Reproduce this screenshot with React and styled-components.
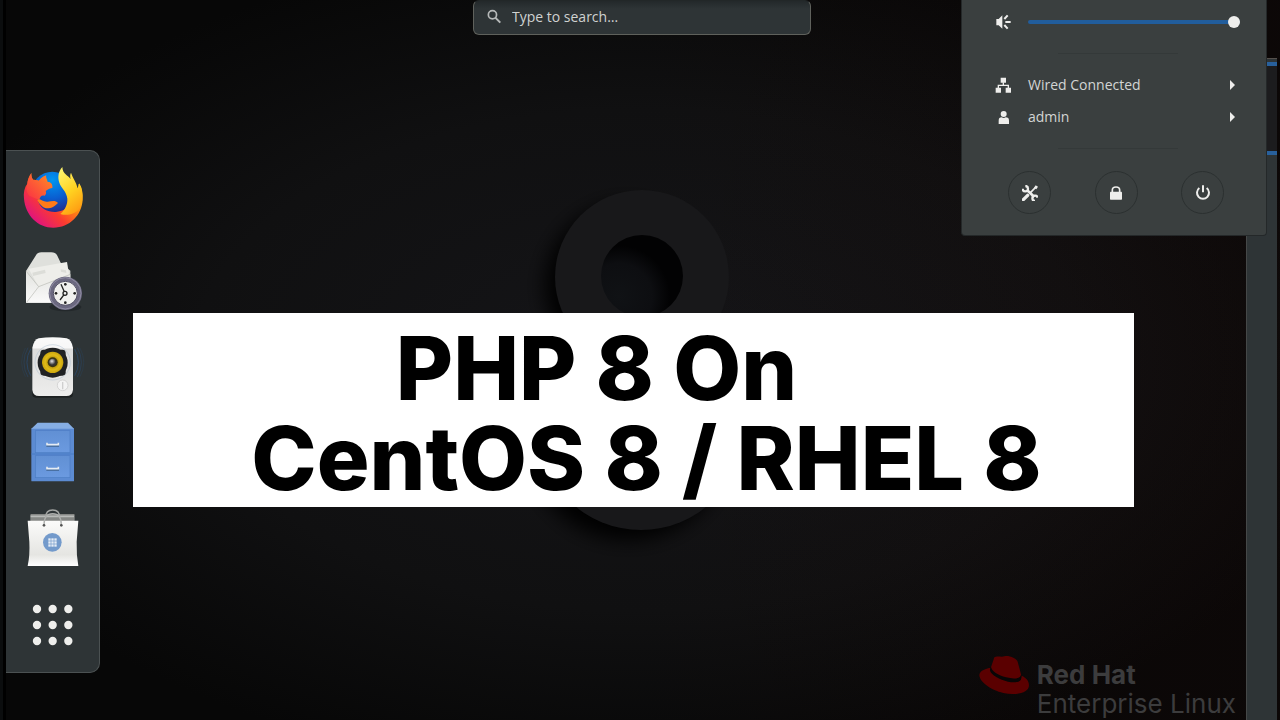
import { useState } from 'react';
import styled, { createGlobalStyle } from 'styled-components';

const GlobalStyle = createGlobalStyle`
	*, *::before, *::after {
		box-sizing: border-box;
	}
	body {
		margin: 0;
		background: #000;
		font-family: 'Open Sans', 'Noto Sans', sans-serif;
	}
	button {
		padding: 0;
		border: 0;
		background: none;
		color: inherit;
		font: inherit;
		cursor: pointer;
	}
`;

const Desktop = styled.div`
	position: relative;
	display: grid;
	grid-template-columns: 100px 1fr 34px;
	min-height: 100vh;
	overflow: hidden;
	background: #0a0a0b;
`;

const Wallpaper = styled.svg`
	position: absolute;
	inset: 0;
	width: 100%;
	height: 100%;
`;

const Side = styled.div`
	position: relative;
	padding-left: 6px;
	background: linear-gradient(to right, #0b0d0e 3px, #000 3px, #000 6px, transparent 6px);
`;

const Dock = styled.nav`
	display: flex;
	flex-direction: column;
	gap: 25px;
	margin-top: 150px;
	padding: 16px 0 20px 17px;
	border: 1px solid #4b5152;
	border-left: 0;
	border-radius: 0 10px 10px 0;
	background: #2e3436;
`;

const DockButton = styled.button`
	display: block;
	width: 60px;
	height: 60px;

	& > svg {
		display: block;
		width: 60px;
		height: 60px;
		overflow: visible;
	}
`;

const Main = styled.main`
	position: relative;
	display: flex;
	flex-direction: column;
	min-width: 0;
`;

const SearchRow = styled.form`
	display: flex;
	justify-content: center;
	padding-right: 62px;
`;

const SearchBox = styled.label`
	display: flex;
	align-items: center;
	gap: 10px;
	width: 338px;
	height: 35px;
	padding: 0 13px 2px;
	border: 1px solid #5f615c;
	border-top-color: #222728;
	border-radius: 6px;
	background: linear-gradient(#23282a, #2e3436 8px);

	& > svg {
		flex: none;
		width: 15px;
		height: 15px;
	}
`;

const SearchInput = styled.input`
	flex: 1;
	min-width: 0;
	padding: 0;
	border: 0;
	outline: 0;
	background: none;
	color: #d3d5d4;
	font-family: inherit;
	font-size: 14px;
	line-height: 20px;

	&::placeholder {
		color: #d0d2d1;
		opacity: 1;
	}
`;

const Banner = styled.h1`
	margin: 278px 112px 0 33px;
	padding: 10px 0 4px 26px;
	background: #fff;
	color: #000;
	font-family: Inter, 'Open Sans', sans-serif;
	font-size: 88px;
	font-weight: 800;
	line-height: 90px;
	text-align: center;
	white-space: nowrap;
`;

const BannerLine = styled.span`
	display: block;
	padding-right: ${(props) => (props.$lead ? '100px' : '0')};
`;

const Brand = styled.div`
	display: flex;
	gap: 8px;
	margin: auto 10px 2px auto;

	& > svg {
		width: 50px;
		height: 40px;
	}
`;

const BrandText = styled.div`
	padding-top: 6px;
	color: #3c3c3d;
	font-family: Inter, Lato, sans-serif;
	font-size: 26px;
	line-height: 29px;
`;

const BrandName = styled.div`
	font-weight: 700;
`;

const Workspaces = styled.aside`
	position: relative;
	margin: 58px 3px 0 0;
	padding: 3px 0 0 8px;
	border-top: 1px solid #55504c;
	border-left: 1px solid #454848;
	background: #2e3436;
`;

const Workspace = styled.div`
	height: 93px;
	border: 4px solid #28609c;
	border-right: 0;
	background: #1c1c1e;
`;

const Menu = styled.section`
	position: absolute;
	top: 0;
	right: 13px;
	width: 306px;
	padding: 5px 26px 21px 33px;
	border: 1px solid #242829;
	border-top: 0;
	border-radius: 0 0 4px 4px;
	background: #3a3f3f;
	color: #d3d5d4;
`;

const SliderRow = styled.label`
	display: grid;
	grid-template-columns: 16px 1fr;
	align-items: center;
	gap: 17px;
	height: 33px;
`;

const Slider = styled.input`
	appearance: none;
	width: 100%;
	height: 12px;
	margin: 0;
	background: transparent;

	&::-webkit-slider-runnable-track {
		height: 4px;
		border-radius: 2px;
		background: #215d9c;
	}
	&::-webkit-slider-thumb {
		appearance: none;
		width: 12px;
		height: 12px;
		margin-top: -4px;
		border-radius: 50%;
		background: #eeeeec;
	}
`;

const Separator = styled.hr`
	width: 120px;
	height: 1px;
	margin: 15px auto;
	border: 0;
	background: #343939;
`;

const MenuItem = styled.button`
	display: grid;
	grid-template-columns: 16px 1fr 16px;
	align-items: center;
	gap: 17px;
	width: 100%;
	height: 32px;
	font-size: 14px;
	line-height: 20px;
	text-align: left;
`;

const Glyph = styled.svg`
	display: block;
	width: 16px;
	height: 16px;
`;

const Actions = styled.div`
	display: flex;
	justify-content: space-between;
	padding: 7px 16px 0 13px;
`;

const ActionButton = styled.button`
	display: grid;
	place-items: center;
	width: 43px;
	height: 43px;
	border: 1px solid #2b3030;
	border-radius: 50%;
`;

const Backdrop = () => (
	<Wallpaper viewBox="0 0 1280 720" preserveAspectRatio="xMidYMid slice" aria-hidden="true">
		<defs>
			<radialGradient id="glow" cx="0.5" cy="0.5" r="0.58">
				<stop offset="0" stopColor="#151518" />
				<stop offset="0.6" stopColor="#101011" />
				<stop offset="1" stopColor="#070707" />
			</radialGradient>
			<linearGradient id="warm" x1="0" x2="1">
				<stop offset="0.5" stopColor="#200a08" stopOpacity="0" />
				<stop offset="1" stopColor="#200a08" stopOpacity="0.2" />
			</linearGradient>
			<radialGradient id="pit" cx="0.22" cy="0.75" r="0.62">
				<stop offset="0" stopColor="#101215" />
				<stop offset="0.65" stopColor="#0d0e11" />
				<stop offset="1" stopColor="#020203" />
			</radialGradient>
			<filter id="soft" x="-30%" y="-30%" width="160%" height="160%">
				<feGaussianBlur stdDeviation="10" />
			</filter>
		</defs>
		<rect width="1280" height="720" fill="url(#glow)" />
		<rect width="1280" height="720" fill="url(#warm)" />
		<g filter="url(#soft)" fill="#030303">
			<circle cx="627" cy="286" r="82" />
			<circle cx="628" cy="438" r="102" />
		</g>
		<circle cx="642" cy="277" r="87" fill="#18181a" />
		<circle cx="641" cy="427" r="103" fill="#18181a" />
		<circle cx="642" cy="276" r="41" fill="url(#pit)" />
	</Wallpaper>
);

const Firefox = () => (
	<svg viewBox="69 81 180 180" aria-hidden="true">
		<defs>
			<linearGradient id="ffBody" x1="0.9" y1="0.15" x2="0.15" y2="0.85">
				<stop offset="0" stopColor="#ffcf1f" />
				<stop offset="0.35" stopColor="#ff8a12" />
				<stop offset="0.65" stopColor="#fb3b30" />
				<stop offset="1" stopColor="#e0147e" />
			</linearGradient>
			<linearGradient id="ffFlame" x1="0.3" y1="0" x2="0.7" y2="1">
				<stop offset="0" stopColor="#fff36a" />
				<stop offset="0.5" stopColor="#ffd321" />
				<stop offset="1" stopColor="#ff9a12" />
			</linearGradient>
			<linearGradient id="ffHead" x1="0" y1="1" x2="1" y2="0">
				<stop offset="0" stopColor="#fa2f45" />
				<stop offset="1" stopColor="#ff9023" />
			</linearGradient>
			<radialGradient id="ffGlobe" cx="0.5" cy="0.2" r="0.8">
				<stop offset="0" stopColor="#0096f0" />
				<stop offset="0.55" stopColor="#0a5dd0" />
				<stop offset="1" stopColor="#252a86" />
			</radialGradient>
		</defs>
		<circle cx="157" cy="158" r="63" fill="url(#ffGlobe)" />
		<path d="M94 99 C86 110 82 122 82 131 C73 142 70 158 72 176 C76 226 114 263 160 263 C209 263 245 226 248 180 C249 160 246 143 238 130 L232 148 C227 178 210 213 168 216 C142 217 124 206 117 190 C111 176 113 161 122 151 L140 142 L154 139 C157 131 152 126 143 126 C142 119 138 115 138 107 C129 109 122 115 117 122 C109 119 104 119 99 119 C95 113 94 106 94 99 Z" fill="url(#ffBody)" />
		<path d="M94 99 C86 113 83 125 82 131 C77 145 80 158 88 167 L118 180 C120 169 125 164 134 167 C139 162 139 157 137 153 C144 147 152 145 157 144 C159 134 153 127 142 126 C138 119 136 114 139 106 C129 109 122 115 117 122 L99 119 C95 113 93 107 94 99 Z" fill="url(#ffHead)" />
		<path d="M112 180 C119 173 128 187 143 185 C156 184 166 180 174 189 C167 194 163 203 145 205 C130 206 119 194 112 180 Z" fill="#ff7a18" />
		<path d="M187 81 C174 95 173 113 178 128 C183 144 200 154 202 176 C203 194 195 209 181 222 C203 229 225 221 238 207 C247 192 249 173 246 154 C246 146 242 137 235 131 C237 137 235 142 233 145 C228 124 219 116 213 98 C210 104 210 110 212 117 C204 106 188 103 187 81 Z" fill="url(#ffFlame)" />
	</svg>
);

const Mail = () => (
	<svg viewBox="69 336 180 180" aria-hidden="true">
		<defs>
			<linearGradient id="env" x1="0" y1="0" x2="0" y2="1">
				<stop offset="0" stopColor="#e2e3df" />
				<stop offset="1" stopColor="#fafafa" />
			</linearGradient>
		</defs>
		<path d="M78 393 L107 347 Q113 337 124 337 H154 Q166 337 172 347 L182 368 L211 392 V488 H78 Z" fill="#dfe0dc" />
		<path d="M86 386 L201 366 L208 408 L116 441 Z" fill="#eeeeea" />
		<path d="M97 398 L135 389 L137 399 L99 408 Z M182 388 L198 391 L199 399 L183 395 Z" fill="#dcddd8" />
		<path d="M78 393 L116 440 L211 403 V488 H78 Z" fill="url(#env)" />
		<path d="M78 393 L116 440 L80 487 M116 440 L211 403" stroke="#b9bbb5" strokeWidth="2" fill="none" />
		<ellipse cx="196" cy="501" rx="48" ry="13" fill="#202426" opacity="0.7" />
		<circle cx="196" cy="460" r="50" fill="#6b6880" />
		<circle cx="196" cy="460" r="47" fill="none" stroke="#8f8ca2" strokeWidth="3" />
		<circle cx="196" cy="460" r="36" fill="#f1f1ef" stroke="#504d62" strokeWidth="3" />
		<g fill="#222">
			<circle cx="196" cy="433" r="4" />
			<circle cx="196" cy="488" r="4" />
			<circle cx="168" cy="460" r="4" />
			<circle cx="224" cy="460" r="4" />
		</g>
		<path d="M183 433 L195 460 M195 460 L180 480" stroke="#222" strokeWidth="4" />
		<circle cx="195" cy="460" r="6" fill="#f1f1ef" stroke="#222" strokeWidth="4" />
	</svg>
);

const Speaker = () => (
	<svg viewBox="69 36 180 180" aria-hidden="true">
		<defs>
			<linearGradient id="cab" x1="0" y1="0" x2="0" y2="1">
				<stop offset="0" stopColor="#fafafa" />
				<stop offset="0.18" stopColor="#f7f7f7" />
				<stop offset="0.2" stopColor="#dcdcdb" />
				<stop offset="1" stopColor="#ededec" />
			</linearGradient>
			<radialGradient id="cone">
				<stop offset="0.3" stopColor="#a98808" />
				<stop offset="0.7" stopColor="#e0bb18" />
				<stop offset="1" stopColor="#caa50e" />
			</radialGradient>
			<radialGradient id="cap" cx="0.4" cy="0.35">
				<stop offset="0" stopColor="#e6e6e6" />
				<stop offset="1" stopColor="#333" />
			</radialGradient>
		</defs>
		<g fill="none" stroke="#29486b" strokeWidth="3">
			<path d="M92 72 A77 77 0 0 0 92 152 M224 72 A77 77 0 0 1 224 152" opacity="0.8" />
			<path d="M84 68 A86 86 0 0 0 84 156 M232 68 A86 86 0 0 1 232 156" opacity="0.5" />
			<path d="M76 69 A93 93 0 0 0 76 155 M240 69 A93 93 0 0 1 240 155" opacity="0.3" />
		</g>
		<rect x="97" y="196" width="122" height="22" rx="10" fill="#1c2021" />
		<path d="M116 40 Q158 34 200 40 Q214 44 219 68 V194 Q217 213 199 213 H117 Q99 213 97 194 V68 Q102 44 116 40 Z" fill="url(#cab)" />
		<circle cx="158" cy="112" r="53" fill="none" stroke="#a9bcd0" strokeWidth="2" opacity="0.7" />
		<rect x="121" y="74" width="76" height="78" rx="10" fill="#202224" />
		<circle cx="158" cy="113" r="45" fill="#202224" />
		<circle cx="158" cy="112" r="32" fill="url(#cone)" />
		<circle cx="158" cy="112" r="15" fill="#3b3510" />
		<circle cx="158" cy="112" r="11" fill="url(#cap)" />
		<circle cx="188" cy="181" r="16" fill="#f4f4f4" stroke="#c9c9c9" strokeWidth="2" />
		<path d="M188 171 V193" stroke="#cfcfcf" strokeWidth="4" />
	</svg>
);

const Cabinet = () => (
	<svg viewBox="69 291 180 180" aria-hidden="true">
		<defs>
			<linearGradient id="drawer" x1="0" y1="0" x2="0" y2="1">
				<stop offset="0" stopColor="#6190d4" />
				<stop offset="1" stopColor="#6b9ae0" />
			</linearGradient>
		</defs>
		<rect x="94" y="309" width="128" height="160" rx="2" fill="#5c8bd2" />
		<path d="M113 293 H204 L222 311 H94 Z" fill="#86aee4" />
		<rect x="106" y="317" width="104" height="66" fill="url(#drawer)" stroke="#4c7dc4" strokeWidth="2" />
		<rect x="106" y="392" width="104" height="66" fill="url(#drawer)" stroke="#4c7dc4" strokeWidth="2" />
		<path d="M94 387 H222" stroke="#477ac4" strokeWidth="3" />
		{[356, 428].map((y) => (
			<g key={y}>
				<path d={`M141 ${y - 2} V${y + 7} H175 V${y - 2}`} fill="none" stroke="#40648f" strokeWidth="4" />
				<path d={`M141 ${y - 3} V${y + 3} H175 V${y - 3}`} fill="none" stroke="#e6edf5" strokeWidth="5" />
			</g>
		))}
	</svg>
);

const Bag = () => (
	<svg viewBox="69 36 180 180" aria-hidden="true">
		<defs>
			<linearGradient id="paper" x1="0" y1="0" x2="0" y2="1">
				<stop offset="0" stopColor="#fbfbfa" />
				<stop offset="0.75" stopColor="#e5e5e2" />
				<stop offset="1" stopColor="#ffffff" />
			</linearGradient>
		</defs>
		<rect x="91" y="57" width="133" height="22" rx="3" fill="#858785" />
		<path d="M92 64 H222" stroke="#b8bab8" strokeWidth="5" />
		<path d="M137 68 C137 50 146 45 158 45 C170 45 179 50 179 68" fill="none" stroke="#a4a6a4" strokeWidth="4" />
		<path d="M83 77 H235 L230 140 Q229 180 235 213 H83 Q90 180 88 140 Z" fill="url(#paper)" />
		<path d="M132 90 C132 63 144 56 158 56 C173 56 184 64 184 90" fill="none" stroke="#aeb0ae" strokeWidth="4" />
		<circle cx="132" cy="91" r="4" fill="#555" />
		<circle cx="184" cy="91" r="4" fill="#555" />
		<circle cx="157" cy="142" r="28" fill="#739acb" />
		{[133, 142, 151].map((y) => [148, 157, 166].map((x) => (
			<rect key={`${x}-${y}`} x={x - 3} y={y - 3} width="7" height="7" fill="#e6edf6" />
		)))}
	</svg>
);

const AppGrid = () => (
	<svg viewBox="69 291 180 180" aria-hidden="true">
		{[342, 390, 438].map((y) => [111, 158, 205].map((x) => (
			<circle key={`${x}-${y}`} cx={x} cy={y} r="12.5" fill="#eeeeec" />
		)))}
	</svg>
);

const Hat = () => (
	<svg viewBox="51 42 150 120" aria-hidden="true">
		<path d="M85 83 C66 87 52 94 52 106 C53 126 87 151 124 159 C164 167 201 159 201 136 C201 122 192 113 179 107 L176 118 C170 135 119 126 85 83 Z" fill="#5a0000" />
		<path d="M97 52 C105 46 116 52 127 49 C139 45 163 54 167 65 L177 103 C180 120 150 121 127 115 C106 109 86 95 87 82 Z" fill="#5a0000" />
		<path d="M87 80 C82 88 83 94 90 101 C105 117 143 130 164 126 C177 124 180 116 177 105 C176 116 155 118 132 112 C109 106 88 93 87 80 Z" fill="#080606" />
	</svg>
);

const apps = [
	{ name: 'Firefox', Icon: Firefox },
	{ name: 'Evolution', Icon: Mail },
	{ name: 'Rhythmbox', Icon: Speaker },
	{ name: 'Files', Icon: Cabinet },
	{ name: 'Software', Icon: Bag },
	{ name: 'Show Applications', Icon: AppGrid },
];

const Arrow = () => (
	<Glyph viewBox="0 0 16 16" aria-hidden="true">
		<path d="M6 3 L11 8 L6 13 Z" fill="#eeeeec" />
	</Glyph>
);

const SystemMenu = () => {
	const [volume, setVolume] = useState(100);

	return (
		<Menu aria-label="System">
			<SliderRow>
				<Glyph viewBox="136 41 48 48" role="img" aria-label="Volume">
					<path d="M140 56 H147 L158 45 V85 L147 75 H140 Z" fill="#eeeeec" />
					<path d="M164 56 L174 45 M167 65 H183 M164 74 L174 85" stroke="#eeeeec" strokeWidth="6" fill="none" />
				</Glyph>
				<Slider type="range" min="0" max="100" value={volume} onChange={(e) => setVolume(e.target.value)} />
			</SliderRow>
			<Separator />
			<MenuItem type="button">
				<Glyph viewBox="135 232 48 48" aria-hidden="true">
					<path d="M152 234 H168 V249 H152 Z M137 264 H153 V279 H137 Z M167 264 H183 V279 H167 Z" fill="#eeeeec" />
					<path d="M160 248 V257 M145 266 V257 H175 V266" stroke="#eeeeec" strokeWidth="4" fill="none" />
				</Glyph>
				Wired Connected
				<Arrow />
			</MenuItem>
			<MenuItem type="button">
				<Glyph viewBox="135 327 48 48" aria-hidden="true">
					<circle cx="161" cy="342" r="9" fill="#eeeeec" />
					<path d="M146 372 V362 Q146 352 155 352 Q161 356 167 352 Q177 352 177 362 V372 Z" fill="#eeeeec" />
				</Glyph>
				admin
				<Arrow />
			</MenuItem>
			<Separator />
			<Actions>
				<ActionButton type="button" aria-label="Settings">
					<Glyph viewBox="215 554 48 48" aria-hidden="true">
						<path d="M238 579 L258 559" stroke="#eeeeec" strokeWidth="5" />
						<path d="M219 598 L232 585" stroke="#eeeeec" strokeWidth="10" strokeLinecap="round" />
						<path d="M256 555 L263 559 L258 567 L251 562 Z" fill="#eeeeec" />
						<path d="M230 569 L252 590" stroke="#eeeeec" strokeWidth="8" />
						<path d="M225 557 A8 8 0 1 1 217 565 M254 602 A8 8 0 1 1 262 592" stroke="#eeeeec" strokeWidth="7" fill="none" />
					</Glyph>
				</ActionButton>
				<ActionButton type="button" aria-label="Lock">
					<Glyph viewBox="474 554 48 48" aria-hidden="true">
						<rect x="480" y="574" width="36" height="24" rx="2" fill="#eeeeec" />
						<path d="M487 576 V569 Q487 560 498 560 Q509 560 509 569 V576" stroke="#eeeeec" strokeWidth="5" fill="none" />
					</Glyph>
				</ActionButton>
				<ActionButton type="button" aria-label="Power Off">
					<Glyph viewBox="733 554 48 48" aria-hidden="true">
						<path d="M746 563 A18 18 0 1 0 768 563 M757 555 V576" stroke="#eeeeec" strokeWidth="6" fill="none" />
					</Glyph>
				</ActionButton>
			</Actions>
		</Menu>
	);
};

const App = () => {
	const [query, setQuery] = useState('');

	return (
		<>
			<GlobalStyle />
			<Desktop>
				<Backdrop />
				<Side>
					<Dock aria-label="Favorites">
						{apps.map(({ name, Icon }) => (
							<DockButton key={name} type="button" aria-label={name}><Icon /></DockButton>
						))}
					</Dock>
				</Side>
				<Main>
					<SearchRow onSubmit={(e) => e.preventDefault()}>
						<SearchBox>
							<svg viewBox="82 27 44 44" aria-hidden="true">
								<circle cx="98" cy="44" r="12" fill="none" stroke="#b6b9b9" strokeWidth="5" />
								<path d="M107 53 L121 67" stroke="#b6b9b9" strokeWidth="6" />
							</svg>
							<SearchInput
								type="text"
								aria-label="Search"
								placeholder="Type to search…"
								value={query}
								onChange={(e) => setQuery(e.target.value)}
							/>
						</SearchBox>
					</SearchRow>
					<Banner>
						<BannerLine $lead>PHP 8 On</BannerLine>
						<BannerLine>CentOS 8 / RHEL 8</BannerLine>
					</Banner>
					<Brand>
						<Hat />
						<BrandText>
							<BrandName>Red Hat</BrandName>
							Enterprise Linux
						</BrandText>
					</Brand>
				</Main>
				<Workspaces aria-label="Workspaces">
					<Workspace />
				</Workspaces>
				<SystemMenu />
			</Desktop>
		</>
	);
};

export default App;
